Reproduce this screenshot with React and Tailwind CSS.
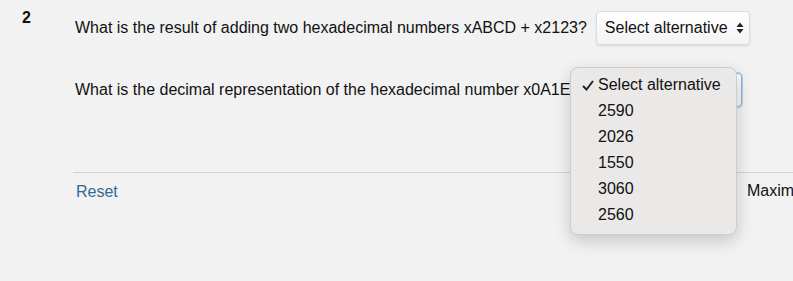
import React from 'react';

const OPTIONS = ['2590', '2026', '1550', '3060', '2560'];

function UpDown() {
  return (
    <svg width="8" height="12" viewBox="0 0 8 12" aria-hidden="true">
      <path d="M4 0.5 L7.5 5 H0.5 Z" fill="#222" />
      <path d="M4 11.5 L7.5 7 H0.5 Z" fill="#222" />
    </svg>
  );
}

function FakeSelect({ focused }) {
  return (
    <div
      className={
        'flex h-[34px] w-[154px] shrink-0 items-center justify-between rounded-[4px] border bg-gradient-to-b from-white to-[#f3f3f3] pl-[8px] pr-[5px] shadow-[0_1px_2px_rgba(0,0,0,0.12)] ' +
        (focused ? 'border-[#8fb1d6] ring-1 ring-[#b9d0ea]' : 'border-[#dcdcdc]')
      }
    >
      <span>Select alternative</span>
      <UpDown />
    </div>
  );
}

export default function App() {
  return (
    <div className="relative h-[281px] w-[793px] overflow-hidden bg-[#f2f2f2] font-['Liberation_Sans',Arial,sans-serif] text-[16px] text-[#111]">
      <div className="flex">
        <div className="w-[75px] shrink-0 pl-[22px] pt-[6px] text-[16px] font-bold">2</div>
        <div className="flex-1">
          <div className="mt-[11px] flex h-[34px] items-center gap-[9px]">
            <span className="whitespace-nowrap">What is the result of adding two hexadecimal numbers xABCD + x2123?</span>
            <FakeSelect />
          </div>
          <div className="mt-[28px] flex h-[34px] items-center gap-[9px]">
            <span className="whitespace-nowrap">What is the decimal representation of the hexadecimal number x0A1E?</span>
            <FakeSelect focused />
          </div>
          <div className="ml-[-2px] mt-[65px] border-t border-[#d2d2d2]" />
          <div className="mt-[7px] flex items-center">
            <span className="w-[672px] shrink-0 pl-[1px] text-[#2f6a95]">Reset</span>
            <span className="-mt-[3px] whitespace-nowrap">Maximum marks: 2</span>
          </div>
        </div>
      </div>

      {/* open native dropdown of the second select */}
      <div className="absolute left-[570px] top-[67px] w-[167px] rounded-[8px] border border-[#cfcccc] bg-[#ebe8e8] pb-[6px] pt-[4px] shadow-[0_6px_16px_rgba(0,0,0,0.18)]">
        <div className="flex h-[26px] items-center">
          <span className="flex w-[27px] justify-end pr-[4px]">
            <svg width="12" height="11" viewBox="0 0 12 11" aria-hidden="true">
              <path d="M1 6 L4.5 9.5 L11 1" fill="none" stroke="#222" strokeWidth="2" />
            </svg>
          </span>
          <span>Select alternative</span>
        </div>
        {OPTIONS.map((o) => (
          <div key={o} className="flex h-[26px] items-center pl-[27px]">
            {o}
          </div>
        ))}
      </div>
    </div>
  );
}
